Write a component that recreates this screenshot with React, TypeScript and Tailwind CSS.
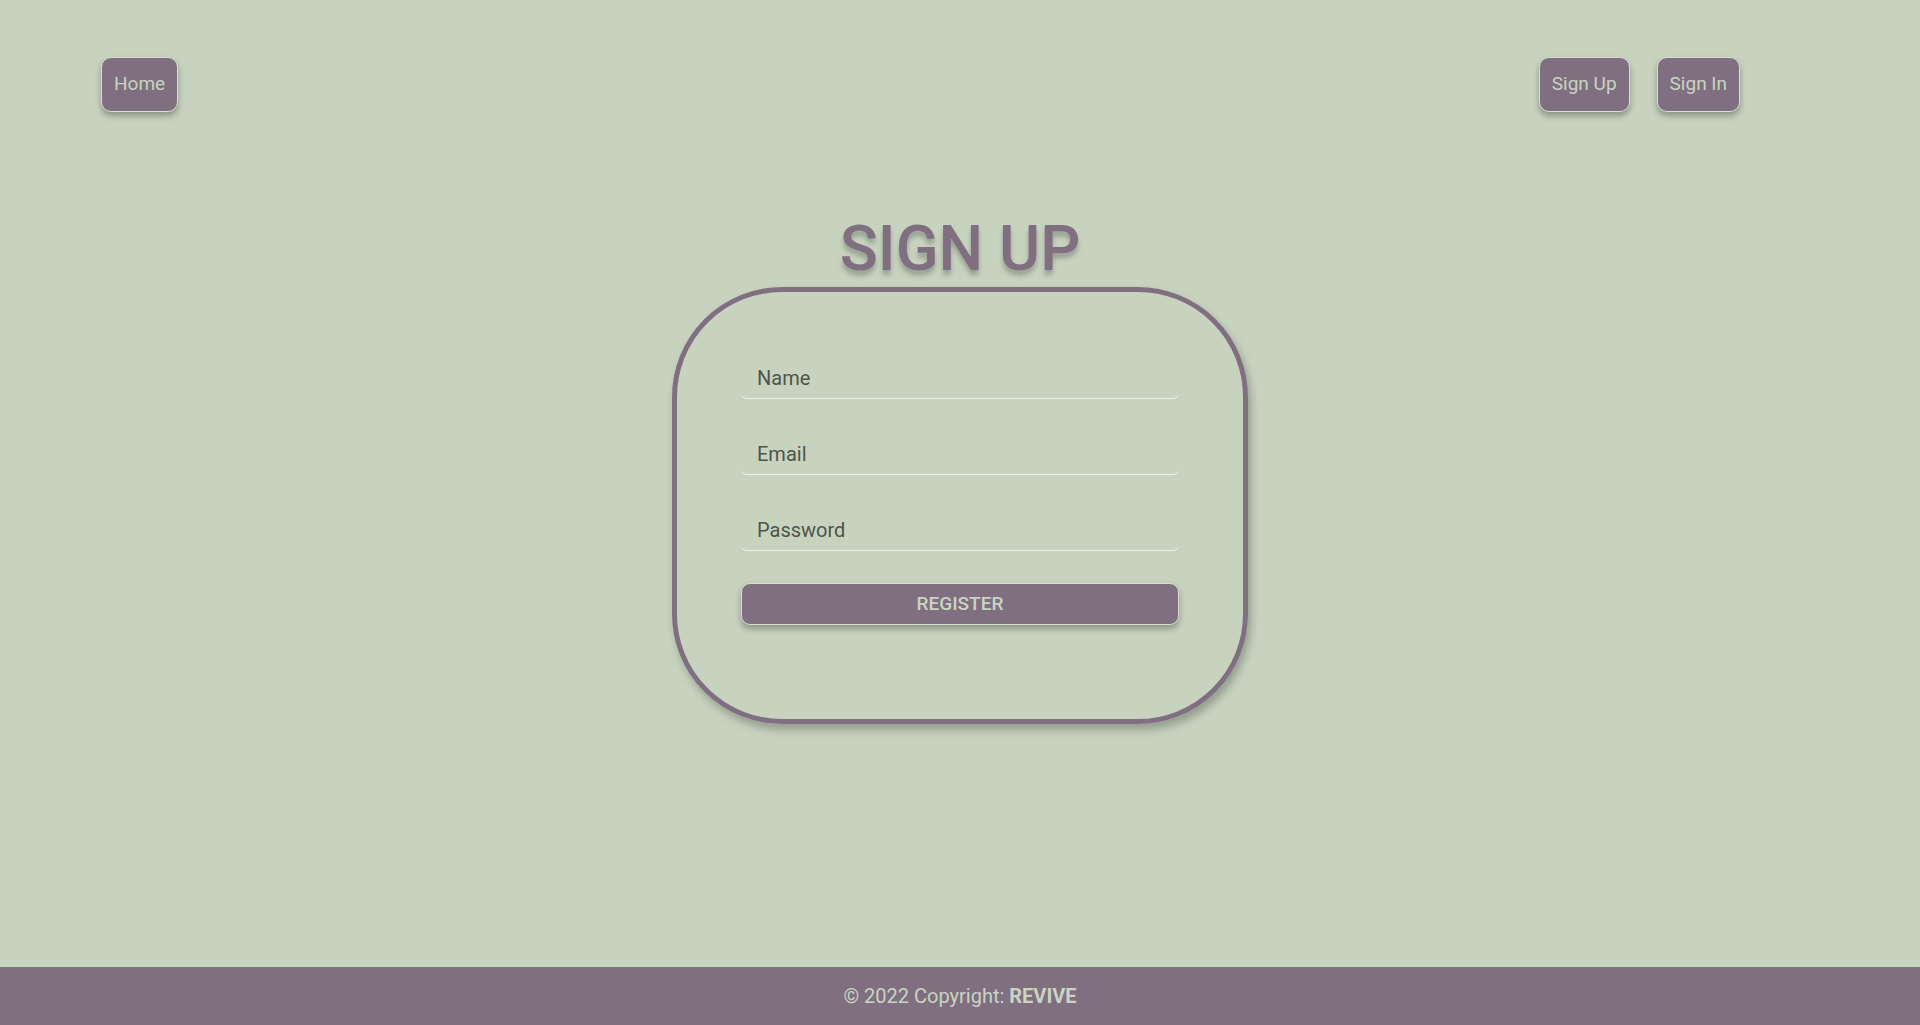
export default function App() {
  const font = { fontFamily: "Roboto, 'Liberation Sans', sans-serif" };
  return (
    <div className="min-h-screen flex flex-col bg-[#c7d3bf]" style={font}>
      <nav className="pt-[57px] pl-[101px] pr-[180px] flex items-center justify-between">
        <button className="h-[55px] px-[12px] rounded-[10px] bg-[#806f81] border border-[#d7dfd1] text-[#c9d4c1] text-[19px] shadow-[0_4px_6px_rgba(0,0,0,0.3)]">
          Home
        </button>
        <div className="flex items-center gap-[27px]">
          <button className="h-[55px] px-[12px] rounded-[10px] bg-[#806f81] border border-[#d7dfd1] text-[#c9d4c1] text-[19px] shadow-[0_4px_6px_rgba(0,0,0,0.3)]">
            Sign Up
          </button>
          <button className="h-[55px] px-[12px] rounded-[10px] bg-[#806f81] border border-[#d7dfd1] text-[#c9d4c1] text-[19px] shadow-[0_4px_6px_rgba(0,0,0,0.3)]">
            Sign In
          </button>
        </div>
      </nav>

      <main className="flex flex-col items-center pt-[105px]">
        <h1 className="text-[63px] leading-[64px] font-medium text-[#806f81] [text-shadow:0_5px_5px_rgba(0,0,0,0.25)]">
          SIGN UP
        </h1>
        <form
          className="mt-[6px] w-[576px] border-[5px] border-[#806f81] rounded-[110px] pt-[65px] pb-[94px] flex flex-col items-center shadow-[3px_6px_8px_rgba(0,0,0,0.25)]"
          onSubmit={(e) => e.preventDefault()}
        >
          <div className="w-[438px] flex flex-col gap-[34px]">
            {["Name", "Email", "Password"].map((p) => (
              <input
                key={p}
                type={p === "Password" ? "password" : "text"}
                placeholder={p}
                className="h-[42px] px-[16px] bg-transparent border-b border-[#eef1ea] rounded-[6px] text-[20px] text-[#4e554b] placeholder:text-[#4e554b] outline-none"
              />
            ))}
          </div>
          <button
            type="submit"
            className="mt-[32px] w-[438px] h-[42px] rounded-[9px] bg-[#806f81] border border-[#d7dfd1] text-[#c9d4c1] text-[19px] font-medium shadow-[0_4px_6px_rgba(0,0,0,0.3)]"
          >
            REGISTER
          </button>
        </form>
      </main>

      <footer className="mt-auto h-[58px] bg-[#806f81] flex items-center justify-center text-[20px] text-[#c9d4c1]">
        © 2022 Copyright:&nbsp;<span className="font-bold">REVIVE</span>
      </footer>
    </div>
  );
}
